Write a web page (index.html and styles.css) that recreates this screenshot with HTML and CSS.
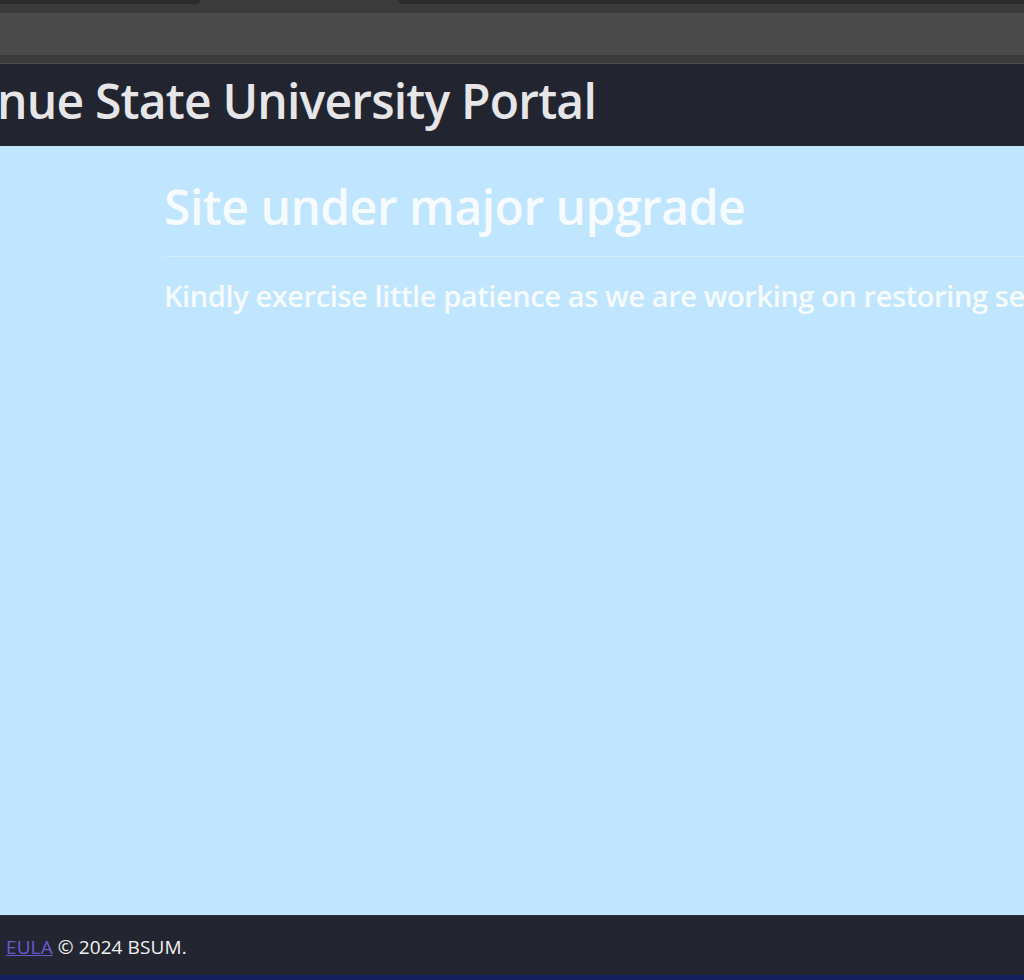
FILE: index.html
```html
<!DOCTYPE html>
<html lang="en">
<head>
<meta charset="utf-8">
<title>Benue State University Portal</title>
<link rel="stylesheet" href="styles.css">
</head>
<body>
<div class="page">
  <div class="chrome">
    <div class="tabstrip">
      <div class="tab tab-left"></div>
      <div class="tab-gap"></div>
      <div class="tab tab-right"></div>
    </div>
    <div class="addressbar"></div>
    <div class="toolbar-bottom"></div>
  </div>
  <header class="site-header">
    <div class="brand">
      <h1 class="brand-title">Benue State University Portal</h1>
    </div>
  </header>
  <main class="content">
    <h1 class="notice-title">Site under major upgrade</h1>
    <hr class="notice-rule">
    <p class="notice-text">Kindly exercise little patience as we are working on restoring services. Thank you.</p>
  </main>
  <footer class="site-footer">
    <p class="footer-text"><a href="#" class="footer-link">EULA</a> &copy; 2024 BSUM.</p>
  </footer>
  <div class="bottom-bar"></div>
</div>
</body>
</html>
```
FILE: styles.css
```css
* { box-sizing: border-box; }
html, body {
  margin: 0;
  padding: 0;
  width: 1024px;
  height: 980px;
  overflow: hidden;
}
body {
  font-family: "Open Sans", "Noto Sans", "Liberation Sans", sans-serif;
  background: #c0e5fe;
}
.page {
  display: flex;
  flex-direction: column;
  height: 980px;
  width: 1024px;
  overflow: hidden;
}
.chrome {
  flex-shrink: 0;
  background: #3b3b3b;
}
.tabstrip {
  display: flex;
  height: 13px;
  background: #3b3b3b;
}
.tab {
  height: 4px;
  background: #2b2b2b;
}
.tab-left {
  width: 200px;
  border-bottom-right-radius: 6px;
}
.tab-gap { width: 198px; }
.tab-right {
  flex: 1;
  border-bottom-left-radius: 6px;
}
.addressbar {
  height: 42px;
  background: #4a4a4a;
}
.toolbar-bottom {
  height: 9px;
  background: #3b3b3b;
  border-bottom: 1px solid #4c4c4c;
}
.site-header {
  flex-shrink: 0;
  height: 82px;
  padding-top: 1px;
  background: #22252f;
  overflow: hidden;
}
.brand {
  display: flex;
  justify-content: flex-end;
  width: 596px;
}
.brand-title {
  flex-shrink: 0;
  margin: 0;
  white-space: nowrap;
  font-size: 48px;
  line-height: 72px;
  letter-spacing: -0.8px;
  font-weight: 600;
  color: #e6e6e8;
}
.content {
  flex: 1;
  padding: 31px 0 0 164px;
  background: #c0e5fe;
  overflow: hidden;
  color: #f6fbff;
}
.notice-title {
  margin: 0;
  font-size: 48px;
  line-height: 60px;
  letter-spacing: -0.5px;
  font-weight: 600;
  white-space: nowrap;
}
.notice-rule {
  margin: 19px 0 0 0;
  border: 0;
  border-top: 1px solid #d2ebfc;
  height: 0;
}
.notice-text {
  margin: 21px 0 0 0;
  font-size: 29px;
  line-height: 36px;
  letter-spacing: -0.4px;
  font-weight: 600;
  white-space: nowrap;
}
.site-footer {
  flex-shrink: 0;
  height: 60px;
  background: #232630;
  border-top: 1px solid #2d3440;
  padding: 19px 0 0 6px;
}
.footer-text {
  margin: 0;
  font-size: 19px;
  line-height: 24px;
  letter-spacing: 0.1px;
  color: #f2f2f2;
}
.footer-link {
  color: #6a5ad0;
  text-decoration: underline;
}
.bottom-bar {
  flex-shrink: 0;
  height: 5px;
  background: #13205e;
}
```
